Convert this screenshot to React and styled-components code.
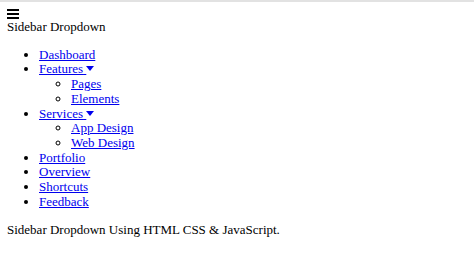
import React from "react"
import styled, { createGlobalStyle } from "styled-components"

const GlobalStyle = createGlobalStyle`
    html, body {
        margin: 0;
        background: #fff;
    }
    body {
        font-family: "Liberation Serif", "Times New Roman", serif;
        font-size: 13px;
        color: #000;
    }
`

const TopBar = styled.div`
    height: 2px;
    background: #e2e2e2;
`

const Page = styled.div`
    padding: 4px 7px 0;
`

const MenuButton = styled.div`
    height: 14px;
    display: flex;
    align-items: center;
`

const Title = styled.div`
    line-height: 14.7px;
`

const Menu = styled.ul`
    margin: 13px 0;
    padding-left: 32px;
    list-style: ${({ $sub }) => ($sub ? "circle" : "disc")};
    ${({ $sub }) => $sub && "margin: 0;"}
`

const Item = styled.li`
    line-height: 14.7px;
`

const Link = styled.a`
    color: #0000ee;
    text-decoration: underline;
`

const Caret = styled.svg`
    width: 8px;
    height: 5px;
    vertical-align: 2px;
`

const Footer = styled.p`
    margin: 14px 0;
    line-height: 14.7px;
`

const menu = [
    { label: "Dashboard" },
    { label: "Features", children: ["Pages", "Elements"] },
    { label: "Services", children: ["App Design", "Web Design"] },
    { label: "Portfolio" },
    { label: "Overview" },
    { label: "Shortcuts" },
    { label: "Feedback" },
]

function Bars() {
    return (
        <svg width="12" height="11" viewBox="0 0 12 11">
            <rect x="0" y="1" width="12" height="2" fill="#000" />
            <rect x="0" y="5" width="12" height="2" fill="#000" />
            <rect x="0" y="9" width="12" height="2" fill="#000" />
        </svg>
    )
}

function App() {
    return (
        <>
            <GlobalStyle />
            <TopBar />
            <Page>
                <MenuButton>
                    <Bars />
                </MenuButton>
                <Title>Sidebar Dropdown</Title>
                <Menu>
                    {menu.map((item) => (
                        <Item key={item.label}>
                            <Link href="#">
                                {item.label}
                                {item.children && (
                                    <>
                                        {" "}
                                        <Caret viewBox="0 0 8 5">
                                            <path d="M0 0 H8 L4 5 Z" fill="#0000ee" />
                                        </Caret>
                                    </>
                                )}
                            </Link>
                            {item.children && (
                                <Menu $sub>
                                    {item.children.map((child) => (
                                        <Item key={child}>
                                            <Link href="#">{child}</Link>
                                        </Item>
                                    ))}
                                </Menu>
                            )}
                        </Item>
                    ))}
                </Menu>
                <Footer>Sidebar Dropdown Using HTML CSS &amp; JavaScript.</Footer>
            </Page>
        </>
    )
}

export default App
